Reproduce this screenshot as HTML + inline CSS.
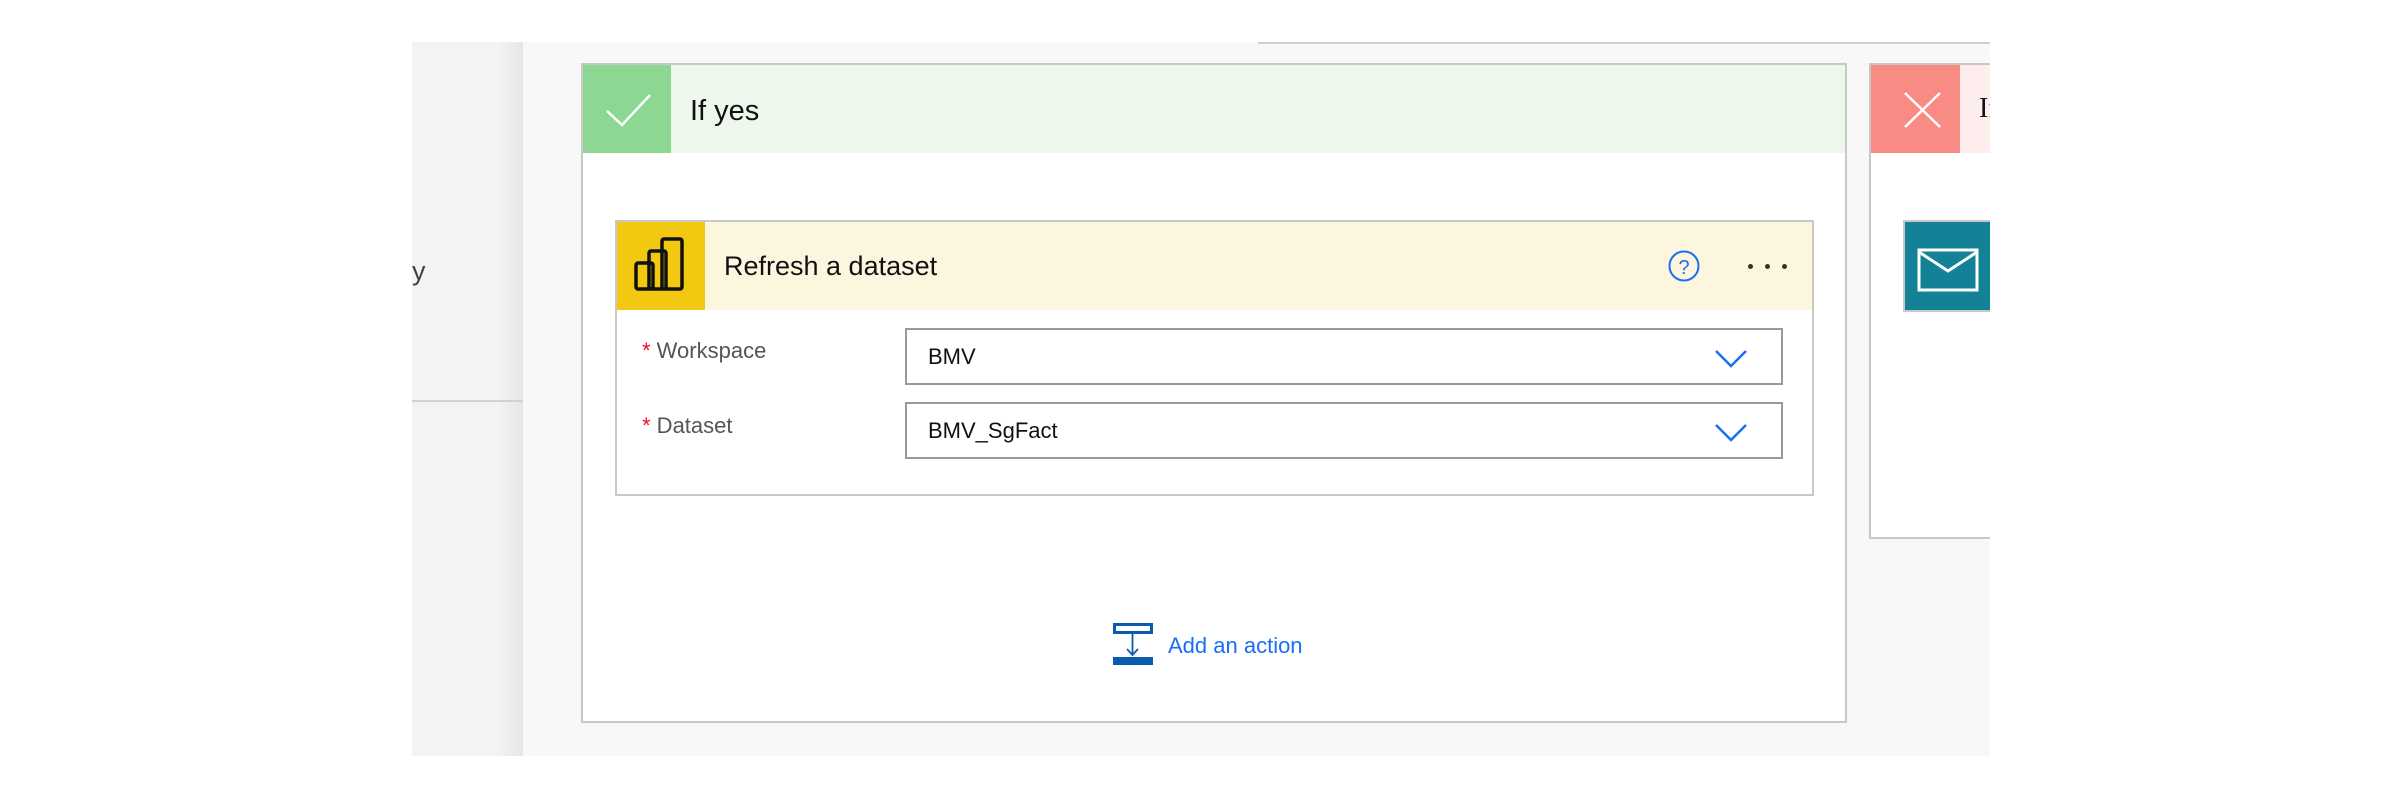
<!DOCTYPE html>
<html><head><meta charset="utf-8"><style>
*{margin:0;padding:0;box-sizing:border-box}
body{width:2400px;height:800px;background:#fff;position:relative;overflow:hidden;font-family:"Liberation Sans",sans-serif}
.a{position:absolute}
</style></head><body>
<div class="a" style="left:412px;top:42px;width:1578px;height:714px;overflow:hidden;background:#f8f8f8">
  <div class="a" style="left:0;top:0;width:111px;height:714px;background:#f3f3f3"></div>
  <div class="a" style="left:86px;top:0;width:25px;height:714px;background:linear-gradient(90deg,#f3f3f3,#e6e6e6)"></div>
  <div class="a" style="left:0;top:358px;width:111px;height:2px;background:#d2d2d2"></div>
  <div class="a" style="left:0;top:214px;font-size:27px;color:#444">y</div>
  <div class="a" style="left:846px;top:0;width:732px;height:2px;background:#d0d0d0"></div>

  <div class="a" style="left:169px;top:21px;width:1266px;height:660px;background:#fff;border:2px solid #c8c8c8">
    <div class="a" style="left:0;top:0;width:1262px;height:88px;background:#edf7ec"></div>
    <div class="a" style="left:0;top:0;width:88px;height:88px;background:#8cd892">
      <svg width="88" height="88" viewBox="0 0 88 88"><path d="M24 46 L39 60 L67 30" fill="none" stroke="#fff" stroke-width="2.5"/></svg>
    </div>
    <div class="a" style="left:107px;top:30px;font-size:29px;color:#111">If yes</div>

    <div class="a" style="left:32px;top:155px;width:1199px;height:276px;border:2px solid #c8c8c8;background:#fff">
      <div class="a" style="left:0;top:0;width:1195px;height:88px;background:#fcf6df"></div>
      <div class="a" style="left:0;top:0;width:88px;height:88px;background:#f2c811">
        <svg width="88" height="88" viewBox="0 0 88 88" style="position:absolute;left:0;top:0"><g fill="none" stroke="#111" stroke-width="3.5" stroke-linejoin="round"><rect x="19" y="41" width="17" height="26" rx="2"/><rect x="32" y="29" width="17" height="38" rx="2"/><rect x="45" y="17" width="20" height="50" rx="2"/></g></svg>
      </div>
      <div class="a" style="left:107px;top:29px;font-size:27px;color:#111">Refresh a dataset</div>
      <svg class="a" style="left:1050px;top:27px" width="34" height="34" viewBox="0 0 34 34"><circle cx="17" cy="17" r="14.5" fill="none" stroke="#1a6ef5" stroke-width="2"/><text x="17" y="25" text-anchor="middle" font-family="Liberation Sans" font-size="20" fill="#1a6ef5">?</text></svg>
      <div class="a" style="left:1131px;top:42px;width:5px;height:5px;border-radius:50%;background:#333"></div>
      <div class="a" style="left:1148px;top:42px;width:5px;height:5px;border-radius:50%;background:#333"></div>
      <div class="a" style="left:1165px;top:42px;width:5px;height:5px;border-radius:50%;background:#333"></div>

      <div class="a" style="left:25px;top:116px;font-size:22px;color:#555"><span style="color:#e81123">*</span> Workspace</div>
      <div class="a" style="left:25px;top:191px;font-size:22px;color:#555"><span style="color:#e81123">*</span> Dataset</div>

      <div class="a" style="left:288px;top:106px;width:878px;height:57px;border:2px solid #999;background:#fff">
        <div class="a" style="left:21px;top:14px;font-size:22px;color:#111">BMV</div>
        <svg class="a" style="left:807px;top:18px" width="34" height="22" viewBox="0 0 34 22"><path d="M2 3 L17 18 L32 3" fill="none" stroke="#1a6ef5" stroke-width="2.5"/></svg>
      </div>
      <div class="a" style="left:288px;top:180px;width:878px;height:57px;border:2px solid #999;background:#fff">
        <div class="a" style="left:21px;top:14px;font-size:22px;color:#111">BMV_SgFact</div>
        <svg class="a" style="left:807px;top:18px" width="34" height="22" viewBox="0 0 34 22"><path d="M2 3 L17 18 L32 3" fill="none" stroke="#1a6ef5" stroke-width="2.5"/></svg>
      </div>
    </div>

    <svg class="a" style="left:530px;top:558px" width="42" height="44" viewBox="0 0 42 44"><rect x="1.5" y="1.5" width="37" height="8" fill="#fff" stroke="#0b5cad" stroke-width="3"/><path d="M19.5 10 V32 M14 26 L19.5 32 L25 26" fill="none" stroke="#0b5cad" stroke-width="1.8"/><rect x="0" y="34" width="40" height="8" fill="#0b5cad"/></svg>
    <div class="a" style="left:585px;top:568px;font-size:22px;color:#1a6ef5">Add an action</div>
  </div>

  <div class="a" style="left:1457px;top:21px;width:300px;height:476px;background:#fff;border:2px solid #c8c8c8">
    <div class="a" style="left:0;top:0;width:300px;height:88px;background:#fdeeed"></div>
    <div class="a" style="left:0;top:0;width:89px;height:88px;background:#f98b85">
      <svg width="89" height="88" viewBox="0 0 89 88"><path d="M34 28 L69 62 M69 28 L34 62" stroke="#fff" stroke-width="2.5"/></svg>
    </div>
    <div class="a" style="left:108px;top:28px;font-size:28px;color:#111;font-family:'Liberation Serif',serif">If no</div>
    <div class="a" style="left:32px;top:155px;width:200px;height:92px;border:2px solid #c8c8c8;background:#138296">
      <svg class="a" style="left:12px;top:26px" width="64" height="44" viewBox="0 0 64 44"><rect x="2" y="2" width="58" height="40" fill="none" stroke="#fff" stroke-width="3"/><path d="M2 4 L31 23 L60 4" fill="none" stroke="#fff" stroke-width="3"/></svg>
    </div>
  </div>
</div>
</body></html>
